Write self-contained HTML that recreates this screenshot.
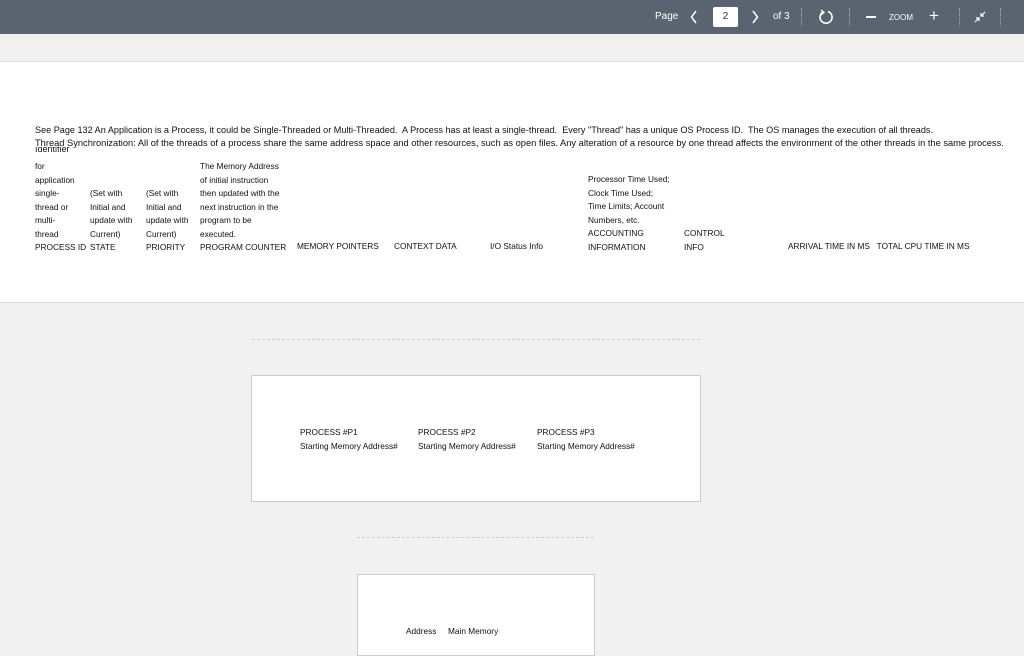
<!DOCTYPE html><html><head><style>
body{margin:0;width:1024px;height:640px;overflow:hidden;background:#f1f1f1;font-family:"Liberation Sans",sans-serif;position:relative}
.tb{position:absolute;left:0;top:0;width:1024px;height:34px;background:#5a6470;color:#fff;font-size:10px}
.tb span{position:absolute;top:11px}
.sep{position:absolute;top:8px;height:18px;border-left:1px dotted #aab}
.page{position:absolute;left:0;top:61px;width:1024px;height:240px;background:#fff;border-top:1px solid #ddd;border-bottom:1px solid #ddd}
.t{position:absolute;font-size:8.3px;color:#111;white-space:nowrap;line-height:10px}
.box{position:absolute;background:#fff;border:1px solid #ccc}
.dash{position:absolute;border-top:1px dashed #ccc}
</style></head><body>
<div class="tb">
<span style="left:655px">Page</span>
<svg style="position:absolute;left:690px;top:10px" width="8" height="14" viewBox="0 0 8 14"><path d="M6 1L1.5 7 6 13" fill="none" stroke="#fff" stroke-width="1.5"/></svg>
<div style="position:absolute;left:713px;top:7px;width:25px;height:20px;background:#fff;border-radius:2px;color:#333;text-align:center;line-height:20px">2</div>
<svg style="position:absolute;left:751px;top:10px" width="8" height="14" viewBox="0 0 8 14"><path d="M2 1L6.5 7 2 13" fill="none" stroke="#fff" stroke-width="1.5"/></svg>
<span style="left:773px">of 3</span>
<div class="sep" style="left:801px"></div>
<svg style="position:absolute;left:818px;top:9px" width="16" height="16" viewBox="0 0 16 16"><path d="M5 3A6 6 0 1 0 10 2.5" fill="none" stroke="#fff" stroke-width="1.6"/><path d="M3 1L6 3.5 3 6" fill="none" stroke="#fff" stroke-width="1.4"/></svg>
<div class="sep" style="left:849px"></div>
<div style="position:absolute;left:866px;top:16px;width:10px;height:2px;background:#fff"></div>
<span style="left:889px;font-size:8px;top:13px">ZOOM</span>
<span style="left:929px;top:6px;font-size:17px">+</span>
<div class="sep" style="left:959px"></div>
<svg style="position:absolute;left:974px;top:11px" width="12" height="12" viewBox="0 0 12 12"><path d="M1 11L5 7M2 7H5V10M11 1L7 5M7 2V5H10" fill="none" stroke="#fff" stroke-width="1.2"/></svg>
<div class="sep" style="left:1000px"></div>
</div>
<div class="page"></div>
<div class="t" style="left:35px;top:125px;font-size:9.1px">See Page 132 An Application is a Process, it could be Single-Threaded or Multi-Threaded.&nbsp; A Process has at least a single-thread.&nbsp; Every "Thread" has a unique OS Process ID.&nbsp; The OS manages the execution of all threads.</div>
<div class="t" style="left:35px;top:138px;font-size:9.3px">Thread Synchronization: All of the threads of a process share the same address space and other resources, such as open files. Any alteration of a resource by one thread affects the environment of the other threads in the same process.</div>
<div style="position:absolute;left:35px;top:147px;height:6px;overflow:hidden"><div class="t" style="position:relative;top:-3px;font-size:9px">Identifier</div></div>
<div class="t" style="left:35px;top:160px;line-height:13.5px">for<br>application<br>single-<br>thread or<br>multi-<br>thread<br>PROCESS ID</div>
<div class="t" style="left:90px;top:187px;line-height:13.5px">(Set with<br>Initial and<br>update with<br>Current)<br>STATE</div>
<div class="t" style="left:146px;top:187px;line-height:13.5px">(Set with<br>Initial and<br>update with<br>Current)<br>PRIORITY</div>
<div class="t" style="left:200px;top:160px;line-height:13.5px">The Memory Address<br>of initial instruction<br>then updated with the<br>next instruction in the<br>program to be<br>executed.<br>PROGRAM COUNTER</div>
<div class="t" style="left:297px;top:241px">MEMORY POINTERS</div>
<div class="t" style="left:394px;top:241px">CONTEXT DATA</div>
<div class="t" style="left:490px;top:241px">I/O Status Info</div>
<div class="t" style="left:588px;top:173px;line-height:13.5px">Processor Time Used;<br>Clock Time Used;<br>Time Limits; Account<br>Numbers, etc.<br>ACCOUNTING<br>INFORMATION</div>
<div class="t" style="left:684px;top:227px;line-height:13.5px">CONTROL<br>INFO</div>
<div class="t" style="left:788px;top:241px">ARRIVAL TIME IN MS&nbsp;&nbsp; TOTAL CPU TIME IN MS</div>
<div class="dash" style="left:252px;top:339px;width:448px"></div>
<div class="box" style="left:251px;top:375px;width:448px;height:125px"></div>
<div class="t" style="left:300px;top:426px;line-height:13.5px">PROCESS #P1<br>Starting Memory Address#</div>
<div class="t" style="left:418px;top:426px;line-height:13.5px">PROCESS #P2<br>Starting Memory Address#</div>
<div class="t" style="left:537px;top:426px;line-height:13.5px">PROCESS #P3<br>Starting Memory Address#</div>
<div class="dash" style="left:357px;top:537px;width:237px"></div>
<div class="box" style="left:357px;top:574px;width:236px;height:80px"></div>
<div class="t" style="left:406px;top:626px">Address&nbsp;&nbsp;&nbsp;&nbsp; Main Memory</div>
</body></html>
